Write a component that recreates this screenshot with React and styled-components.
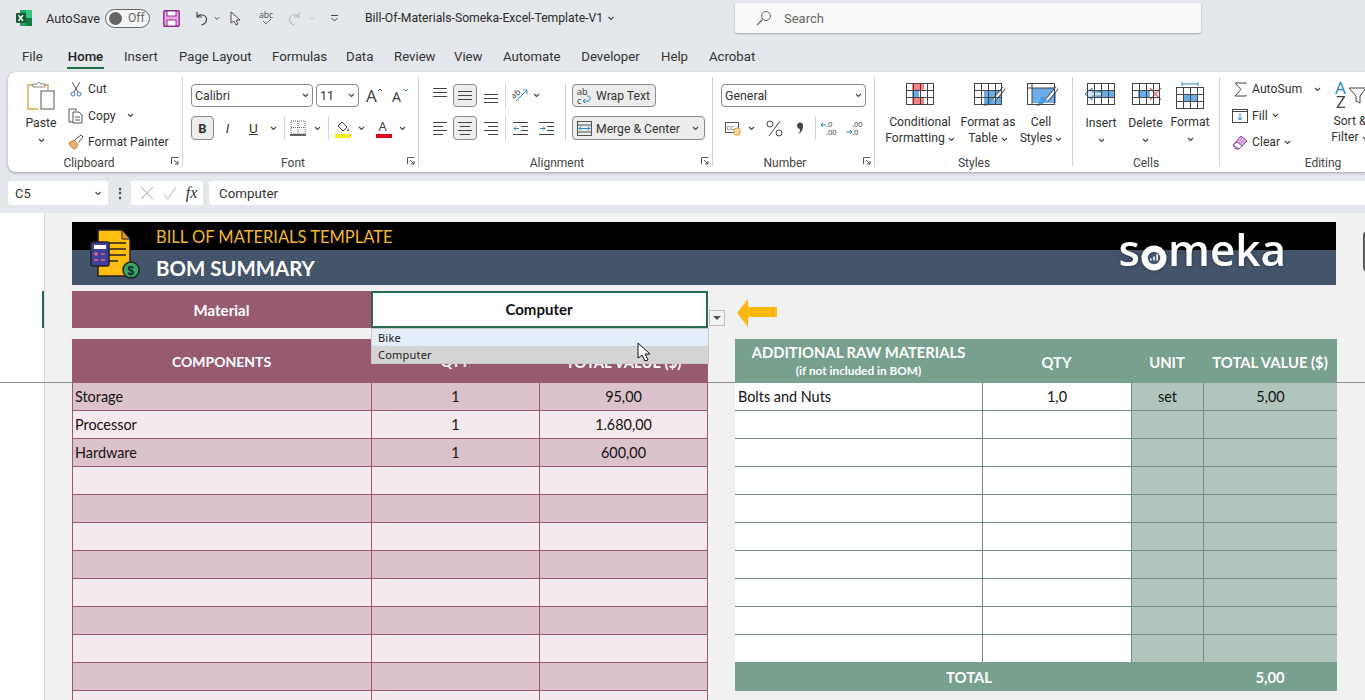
import React from 'react';
import styled, { createGlobalStyle } from 'styled-components';

const Global = createGlobalStyle`
  html, body { margin: 0; padding: 0; height: 100%; overflow: hidden; background: #e4e7eb; }
  #root { height: 100%; }
`;
const ui = `Roboto, "Noto Sans", sans-serif`;
const cell = `"Lato", "Liberation Sans", sans-serif`;

const Page = styled.div`
  width: 1365px; height: 700px; display: flex; flex-direction: column; overflow: hidden;
  background: #e4e7eb; font-family: ${ui}; color: #333;
`;
const TitleBar = styled.div`display: flex; align-items: center; height: 36px; flex: none; font-size: 12.8px; color: #2b2b2b;`;
const Qat = styled.span`
  display: inline-flex; align-items: center; justify-content: center; flex: none;
  width: ${p => p.$w}px; margin-left: ${p => p.$ml || 0}px;
`;
const Toggle = styled.span`
  display: flex; align-items: center; width: 45px; height: 19px; box-sizing: border-box; margin-left: 7px;
  border: 1px solid #666; border-radius: 10px; background: #f4f5f6; padding-left: 3px; font-size: 12px; color: #666; gap: 6px;
  &::before { content: ''; width: 13px; height: 13px; border-radius: 50%; background: #666; }
`;
const DocTitle = styled.span`
  display: inline-flex; align-items: center; gap: 3px; margin-left: 26px; width: 256px; flex: none; font-size: 12.2px; white-space: nowrap;
`;
const SearchBox = styled.div`
  display: flex; align-items: center; gap: 12px; box-sizing: border-box; margin-left: 114px; width: 466px; height: 30px; padding-left: 21px;
  background: #f9f9f9; border-radius: 3px; box-shadow: 0 1px 2px rgba(0,0,0,.28); font-size: 13px; color: #666;
`;
const Tabs = styled.div`display: flex; height: 36px; flex: none; align-items: center; padding: 6px 0 0 22px; box-sizing: border-box; font-size: 13.2px; color: #333;`;
const Tab = styled.span`
  position: relative; flex: none; width: ${p => p.$w}px; margin-left: ${p => p.$ml}px; text-align: center; white-space: nowrap; line-height: 20px;
  ${p => p.$active && `
    font-weight: 500; color: #222;
    &::after { content: ''; position: absolute; left: 0; right: 0; bottom: -2px; height: 2px; background: #1e6b46; }
  `}
`;
const Ribbon = styled.div`
  display: flex; height: 100px; flex: none; margin-left: 8px; box-sizing: border-box; padding-top: 5px; overflow: hidden;
  background: #fff; border-radius: 8px 0 0 8px; box-shadow: 0 1px 3px rgba(0,0,0,.3); font-size: 12.2px; color: #333;
`;
const Group = styled.section`
  position: relative; flex: none; width: ${p => p.$w}px; height: 89px; box-sizing: border-box; display: flex; flex-direction: column;
  border-right: ${p => p.$last ? 'none' : '1px solid #d4d4d4'};
`;
const GroupBody = styled.div`display: flex; flex: 1; padding-top: ${p => p.$pt || 0}px; padding-left: ${p => p.$pl || 0}px;`;
const GroupLabel = styled.div`
  position: absolute; left: ${p => p.$left}px; top: 79px; transform: translateX(-50%); font-size: 12px; line-height: 14px; color: #444; white-space: nowrap;
`;
const Launcher = styled.span`position: absolute; right: 3px; top: 80px; width: 8px; height: 8px; display: flex;`;
const Stack = styled.div`display: flex; flex-direction: column; gap: 10.5px; margin-left: ${p => p.$ml || 0}px; width: ${p => p.$w ? p.$w + 'px' : 'auto'}; flex: none;`;
const SmallTool = styled.div`display: flex; align-items: center; height: 16px; white-space: nowrap;`;
const SmallIcon = styled.span`display: flex; justify-content: center; width: 16px; margin-right: 4px; flex: none;`;
const BigCol = styled.div`
  display: flex; flex-direction: column; align-items: center; flex: none; width: ${p => p.$w}px; margin-left: ${p => p.$ml || 0}px;
  line-height: 16px; text-align: center; white-space: nowrap;
`;
const BigIcon = styled.div`height: ${p => p.$h || 24}px; margin-bottom: ${p => p.$mb ?? 7}px; display: flex; align-items: flex-start; justify-content: center;`;
const ChevLine = styled.div`display: flex; align-items: center; justify-content: center; height: 14px; margin-top: 2px;`;
const Rows = styled.div`display: flex; flex-direction: column; gap: 9px;`;
const ToolRow = styled.div`display: flex; align-items: center; height: ${p => p.$h || 24}px;`;
const SelectBox = styled.div`
  display: flex; align-items: center; justify-content: space-between; box-sizing: border-box; width: ${p => p.$w}px; height: 23px; margin-left: ${p => p.$ml || 0}px;
  padding: 0 3px; border: 1px solid #8a8a8a; border-radius: 4px; font-size: 12.4px; color: #333; flex: none;
`;
const Slot = styled.span`
  display: inline-flex; align-items: center; justify-content: center; flex: none; height: 100%;
  width: ${p => p.$w}px; margin-left: ${p => p.$ml || 0}px; font-size: 13.5px;
`;
const Pressed = styled.span`
  display: inline-flex; align-items: center; justify-content: center; flex: none; box-sizing: border-box; width: ${p => p.$w}px; height: ${p => p.$h || 23}px;
  border: 1px solid #8a8a8a; border-radius: 4px; background: #ececec; font-size: 13px; font-weight: ${p => p.$bold ? 700 : 400};
`;
const ToolSep = styled.span`flex: none; width: 1px; height: 24px; background: #d4d4d4;`;
const AlignPart = styled.div`display: flex; flex-direction: column; gap: 9px; width: 146px; flex: none; border-right: 1px solid #d4d4d4; height: 56px;`;
const WrapPart = styled.div`display: flex; flex-direction: column; gap: 9px; margin-left: 6px;`;
const WrapBtn = styled.div`
  display: flex; align-items: center; gap: 4px; box-sizing: border-box; width: ${p => p.$w}px; height: ${p => p.$h}px; padding: 1px 0 0 4px;
  border: 1px solid #8a8a8a; border-radius: 4px; background: #ececec; white-space: nowrap;
`;
const FormulaBar = styled.div`display: flex; align-items: center; flex: none; height: 24px; margin-top: 9px;`;
const NameBox = styled.div`
  display: flex; align-items: center; justify-content: space-between; box-sizing: border-box; width: 100px; height: 24px; margin-left: 8px; padding: 0 5px 0 7px;
  background: #fff; border-radius: 3px; font-size: 13px;
`;
const Dots = styled.span`width: 23px; text-align: center; flex: none; font-weight: 700; line-height: 20px; font-size: 12px;`;
const FxBox = styled.div`
  display: flex; align-items: center; justify-content: space-around; box-sizing: border-box; width: 72px; height: 24px; padding: 0 1px 0 4px;
  background: #fff; border-radius: 3px; font: italic 400 16px "Liberation Serif", serif; color: #333;
`;
const FormulaInput = styled.div`
  flex: 1; height: 24px; margin-left: 6px; padding-left: 10px; background: #fff; border-radius: 3px 0 0 3px; font-size: 13.4px; line-height: 25px;
`;
const Sheet = styled.div`position: relative; display: flex; flex: 1; margin-top: 8px; min-height: 0; background: #f1f1f1; overflow: hidden;`;
const Gutter = styled.div`position: relative; width: 45px; flex: none; background: #fff; border-right: 1px solid #dcdcdc; box-sizing: border-box;`;
const RowMark = styled.span`position: absolute; right: 0; top: 78px; width: 2px; height: 37px; background: #1e6b46;`;
const FreezeLine = styled.div`position: absolute; left: 0; right: 0; top: 169px; height: 1px; background: #8f8f8f; z-index: 1;`;
const SideTab = styled.div`position: absolute; right: -7px; top: 18px; width: 9px; height: 41px; border-radius: 5px; background: #5a5a5a;`;
const Canvas = styled.div`position: relative; flex: 1; padding: 9px 0 0 27px; font-family: ${cell}; color: #111; font-size: 14.4px;`;
const Banner = styled.div`
  display: flex; width: 1264px; height: 63px; background: linear-gradient(#000 28px, #44546a 28px);
`;
const BannerIcon = styled.div`width: 84px; flex: none; padding: 7px 0 0 16px; box-sizing: border-box;`;
const BannerText = styled.div`display: flex; flex-direction: column;`;
const BannerTop = styled.div`height: 28px; line-height: 30px; font-size: 16.5px; color: #f5b82e; white-space: nowrap;`;
const BannerMain = styled.div`height: 35px; line-height: 36px; font-size: 20.4px; font-weight: 700; color: #fff; white-space: nowrap;`;
const Logo = styled.div`
  display: flex; align-items: baseline; margin-left: auto; margin-right: 50px; color: #fff; font: 600 44px/54px "Open Sans", sans-serif;
  filter: drop-shadow(0 0 2px rgba(0,0,0,.35));
`;
const LogoDot = styled.svg`width: 26px; height: 26px; margin: 0 1px; align-self: center; margin-top: 8px;`;
const MaterialRow = styled.div`display: flex; height: 37px; margin-top: 6px;`;
const MaterialLabel = styled.div`
  display: flex; align-items: center; justify-content: center; width: 299px; flex: none; background: #975a6e; color: #fff; font-weight: 700; font-size: 15px;
`;
const MaterialValue = styled.div`
  position: relative; display: flex; align-items: center; justify-content: center; width: 337px; flex: none; box-sizing: border-box; height: 37px; padding: 0 1px 1px 0;
  background: #fff; border: 2px solid #2c6a4d; font-weight: 700; font-size: 15px; z-index: 5;
`;
const DropList = styled.div`
  position: absolute; left: -1px; right: -2px; top: 36px; height: 34px; background: #fff; box-shadow: 0 0 0 1px #c9c9c9; font: 400 11px/17px "Noto Sans", sans-serif; color: #222;
`;
const DropItem = styled.div`height: 17px; padding-left: 6px; background: ${p => p.$bg}; letter-spacing: .2px;`;
const Cursor = styled.svg`position: absolute; left: 265px; top: 13px; width: 14px; height: 20px;`;
const DropBtn = styled.div`
  display: flex; align-items: center; justify-content: center; box-sizing: border-box; width: 16px; height: 16px; margin: 19px 0 0 1px; background: #f4f4f4; border: 1px solid #bdbdbd;
  &::after { content: ''; border: 4px solid transparent; border-top: 4px solid #555; border-bottom: 0; }
`;
const ArrowWrap = styled.svg`width: 40px; height: 28px; margin: 8px 0 0 12px; flex: none;`;
const Tables = styled.div`position: relative; display: flex; margin-top: 11px; z-index: 2;`;
const TablesGap = styled.div`flex: none; width: 27px;`;
const Grid = styled.div`
  display: grid; grid-template-columns: ${p => p.$cols}; grid-template-rows: 44px; grid-auto-rows: 28px; flex: none;
`;
const Head = styled.div`
  box-sizing: border-box; height: 44px; padding-top: 1px; display: flex; flex-direction: column; align-items: center; justify-content: center;
  background: ${p => p.$bg}; color: #fff; font-weight: 700; font-size: ${p => p.$fs || 14}px; line-height: ${p => p.$lh || 16}px; text-align: center; white-space: nowrap;
`;
const HeadMulti = styled(Head)`justify-content: flex-start; padding-top: 3px;`;
const HeadSub = styled.span`font-size: 11.8px; line-height: 18px;`;
const MCell = styled.div`
  box-sizing: border-box; height: 28px; display: flex; align-items: center; justify-content: ${p => p.$left ? 'flex-start' : 'center'}; padding-left: ${p => p.$left ? 2 : 0}px;
  background: ${p => p.$alt ? '#f4e9ec' : '#dcc2cb'}; border-bottom: 1px solid #975a6e; border-left: 1px solid #975a6e;
  &:nth-child(3n+3) { border-right: 1px solid #975a6e; }
`;
const GCell = styled.div`
  box-sizing: border-box; height: 28px; display: flex; align-items: center; justify-content: ${p => p.$left ? 'flex-start' : 'center'}; padding-left: ${p => p.$left ? 3 : 0}px;
  background: ${p => p.$shade ? '#b2c5bd' : '#fff'}; border-bottom: ${p => p.$last ? 0 : '1px solid #6f8f82'}; border-left: ${p => p.$first ? 0 : '1px solid #6f8f82'};
`;
const TotalCell = styled.div`
  grid-column: ${p => p.$span || 'auto'}; height: 29px; margin-top: -1px; display: flex; align-items: center; justify-content: center; background: #78a08e; color: #fff; font-weight: 700; font-size: 14.8px;
`;

const S = { fill: 'none', stroke: '#444', strokeWidth: 1 };
const Chev = ({ c = '#444', w = 7 }) => <svg width={w} height="5" viewBox="0 0 7 5"><path d="M1 1l2.500 2.500L6 1" fill="none" stroke={c} strokeWidth="1.100" /></svg>;
const ExcelLogo = () => <svg width="16" height="16" viewBox="0 0 16 16"><rect x="4" y="0" width="12" height="16" rx="1" fill="#21a366" /><rect x="10" y="0" width="6" height="8" fill="#33c481" /><rect x="10" y="8" width="6" height="8" fill="#107c41" /><rect x="0" y="3" width="10" height="10" rx="1" fill="#185c37" /><path d="M2.500 5.200l4.500 5.600M7 5.200l-4.500 5.600" stroke="#fff" strokeWidth="1.400" /></svg>;
const SaveIcon = () => <svg width="17" height="17" viewBox="0 0 17 17"><rect x=".8" y=".8" width="15.400" height="15.400" rx="1" fill="#eba6ea" stroke="#8c2d8c" strokeWidth="1.400" /><rect x="4" y="1" width="9" height="5" fill="#fff" stroke="#8c2d8c" /><rect x="4" y="10" width="9" height="6" fill="#fff" stroke="#8c2d8c" /></svg>;
const UndoIcon = ({ c = '#444', flip }) => <svg width="15" height="15" viewBox="0 0 15 15" style={flip ? { transform: 'scaleX(-1)' } : undefined}><path d="M4 1v5h5M4 6c2-3 9-3 9.500 2 .3 3-2 5-5 6" fill="none" stroke={c} strokeWidth="1.200" /></svg>;
const PointerIcon = () => <svg width="11" height="15" viewBox="0 0 11 15"><path d="M1 1v11l3-2 2 4 2-1-2-4h4z" fill="#fff" stroke="#444" /></svg>;
const SpellIcon = () => <svg width="16" height="17" viewBox="0 0 16 17"><text x="0" y="8" fontSize="8.500" fontFamily="Noto Sans" fill="#555">abc</text><path d="M4 11l3 3 5-5" fill="none" stroke="#777" /></svg>;
const CustomizeIcon = () => <svg width="9" height="9" viewBox="0 0 9 9"><path d="M1 1.500h7M1.500 4l3 3 3-3" fill="none" stroke="#444" /></svg>;
const SearchIcon = () => <svg width="16" height="16" viewBox="0 0 16 16"><circle cx="10" cy="6" r="4.500" {...S} stroke="#666" /><path d="M6.500 9.500L1 15" stroke="#666" strokeWidth="1.100" /></svg>;
const PasteIcon = () => <svg width="29" height="30" viewBox="0 0 29 30"><path d="M11 28H1V4h20v5" fill="none" stroke="#e0a345" strokeWidth="1.400" /><path d="M6 6V3h4l2-2 2 2h4v3z" fill="#fff" stroke="#888" /><rect x="14" y="10" width="13" height="18" fill="#fff" stroke="#555" /></svg>;
const ScissorsIcon = () => <svg width="12" height="16" viewBox="0 0 12 16"><path d="M2 1l6 10M10 1L4 11" stroke="#555" /><circle cx="3" cy="13" r="2" fill="none" stroke="#3b7fc4" /><circle cx="9" cy="13" r="2" fill="none" stroke="#3b7fc4" /></svg>;
const CopyIcon = () => <svg width="16" height="16" viewBox="0 0 16 16"><path d="M5 14H1V1h7v2" fill="none" stroke="#555" /><path d="M5 4h6l3 3v8H5z" fill="#fff" stroke="#555" /><path d="M7 9h5M7 12h5" stroke="#555" /></svg>;
const PainterIcon = () => <svg width="16" height="16" viewBox="0 0 16 16"><path d="M1 9l5-3 4 5-3 4c-2 0-5-3-6-6z" fill="#e9b56c" stroke="#b8792a" /><path d="M7 6l6-5 2 2-5 6" fill="#fff" stroke="#555" /></svg>;
const GrowA = ({ s, up }) => <svg width="17" height="17" viewBox="0 0 17 17"><text x="0" y="15" fontSize={s} fontFamily="Noto Sans" fill="#444">A</text><path d={up ? 'M12 4l2-2 2 2' : 'M12 2l2 2 2-2'} fill="none" stroke={up ? '#444' : '#3a87c8'} /></svg>;
const BorderIcon = () => <svg width="16" height="16" viewBox="0 0 16 16"><path d="M1 1h14v13H1zM8 1v13M1 7.500h14" fill="none" stroke="#666" strokeDasharray="1 1" /><path d="M0 15h16" stroke="#333" strokeWidth="1.500" /></svg>;
const FillIcon = () => <svg width="16" height="19" viewBox="0 0 16 19"><path d="M3 7l4-4 5 5-4 4z" fill="#fff" stroke="#444" /><path d="M13 9l1 3h-2z" fill="#444" /><rect y="15" width="16" height="4" fill="#f5ee23" /></svg>;
const FontColorIcon = () => <svg width="16" height="19" viewBox="0 0 16 19"><text x="2.500" y="12" fontSize="13" fontFamily="Noto Sans" fill="#444">A</text><rect y="15" width="16" height="4" fill="#d9001b" /></svg>;
const Lines = ({ ys, x = [[0, 14]] }) => <svg width="15" height="15" viewBox="0 0 15 15">{ys.map((y, i) => { const r = x[i] || x[0]; return <path key={i} d={`M${r[0]} ${y}H${r[1]}`} stroke="#444" />; })}</svg>;
const OrientIcon = () => <svg width="17" height="15" viewBox="0 0 17 15"><path d="M4 13L15 2M11 2h4v4" fill="none" stroke="#3a87c8" /><text x="0" y="9" fontSize="8.500" fontFamily="Noto Sans" fill="#444" transform="rotate(-40 4 8)">ab</text></svg>;
const IndentIcon = ({ right }) => <svg width="15" height="13" viewBox="0 0 15 13"><path d="M0 .5h15M0 12.500h15M8 4.500h7M8 8.500h7" stroke="#444" /><path d={right ? 'M1 6.500h5M4 4.500l2 2-2 2' : 'M6 6.500H1M3 4.500l-2 2 2 2'} fill="none" stroke="#2b88c9" /></svg>;
const WrapIcon = () => <svg width="15" height="18" viewBox="0 0 15 18"><text x="0" y="8" fontSize="9" fontFamily="Noto Sans" fill="#444">ab</text><text x="0" y="17" fontSize="9" fontFamily="Noto Sans" fill="#444">c</text><path d="M6 14h5c3 0 3-5 0-5h-1M6 14l2-2M6 14l2 2" fill="none" stroke="#2b88c9" /></svg>;
const MergeIcon = () => <svg width="15" height="15" viewBox="0 0 15 15"><rect x=".5" y=".5" width="14" height="14" fill="none" stroke="#555" /><path d="M.5 4h14M.5 11h14" stroke="#555" /><path d="M2 7.500h11M4 5.500l-2 2 2 2M11 5.500l2 2-2 2" fill="none" stroke="#2b88c9" /></svg>;
const AccountIcon = () => <svg width="17" height="15" viewBox="0 0 17 15"><rect x=".5" y="1.500" width="13" height="10" fill="#fff" stroke="#555" /><text x="1.500" y="9" fontSize="6" fontFamily="Noto Sans" fill="#444">CC</text><rect x="9" y="7" width="6" height="7" rx="2" fill="#f8d9a8" stroke="#e69a2e" /></svg>;
const DecIcon = ({ more }) => <svg width="17" height="15" viewBox="0 0 17 15"><text x="6" y="6" fontSize="7.500" fontFamily="Noto Sans" fill="#444">{more ? '.00' : '.0'}</text><text x="6" y="14" fontSize="7.500" fontFamily="Noto Sans" fill="#444">{more ? '.0' : '.00'}</text><path d={more ? 'M0 11h6M4 9l2 2-2 2' : 'M6 4H1M3 2L1 4l2 2'} fill="none" stroke="#2b88c9" /></svg>;
const GridIco = ({ children, w = 28, h = 22, cols = [7, 14, 21], rows = [7, 14], top = 0 }) => (
  <svg width={w} height={h + top} viewBox={`0 ${-top} ${w} ${h + top}`} style={{ overflow: 'visible' }}>
    {children}
    <rect x=".5" y=".5" width={w - 1} height={h - 1} fill="none" stroke="#444" />
    {cols.map(x => <path key={x} d={`M${x}.5 0V${h}`} stroke="#444" />)}
    {rows.map(y => <path key={y} d={`M0 ${y}.5H${w}`} stroke="#444" />)}
  </svg>
);
const Brush = () => <g><path d="M30 5L20 17" stroke="#444" strokeWidth="4" /><path d="M30 5L20 17" stroke="#fff" strokeWidth="2.200" /><path d="M19 15c-1 5-4 8-10 8 3-2 3-6 6-10z" fill="#4a9bdc" /></g>;
const CondIcon = () => <GridIco><path d="M6 0h12v7H6zM6 14h12v8H6z" fill="#fb7d85" /><path d="M6 7h7v7H6z" fill="#6dace4" /></GridIco>;
const TableIcon = () => <GridIco><path d="M10 7h18v15H10z" fill="#6dace4" /><Brush /></GridIco>;
const StylesIcon = () => <GridIco cols={[]} rows={[]}><path d="M5 5h24v15H5z" fill="#6dace4" /><path d="M5 0v22M0 5h28" stroke="#444" /><Brush /></GridIco>;
const InsertIcon = () => <GridIco><path d="M10 7h18v8H10z" fill="#6dace4" /><path d="M-2 11l7-6v4h10v4H5v4z" fill="#cfe4f6" stroke="#3a87c8" /></GridIco>;
const DeleteIcon = () => <GridIco><path d="M6 7h12v8H6z" fill="#6dace4" /><path d="M18 5l11 12M29 5L18 17" stroke="#e36a6a" strokeWidth="1.200" /></GridIco>;
const FormatIcon = () => <GridIco top={4}><path d="M7 7h14v8H7z" fill="#6dace4" /><path d="M6 -3h16M6 -5v4M22 -5v4" stroke="#2b88c9" /></GridIco>;
const SigmaIcon = () => <svg width="15" height="15" viewBox="0 0 15 15"><path d="M13 2V1H2l6 6.500L2 14h11v-1" fill="none" stroke="#444" /></svg>;
const FillDown = () => <svg width="16" height="14" viewBox="0 0 16 14"><rect x=".5" y=".5" width="15" height="13" fill="none" stroke="#444" /><path d="M0 2.500h16" stroke="#444" /><path d="M8 4v7M5.500 8.500L8 11l2.500-2.500" fill="none" stroke="#2b88c9" /></svg>;
const EraserIcon = () => <svg width="16" height="15" viewBox="0 0 16 15"><path d="M1 10l8-9 6 5-8 8H4z" fill="#d9a7dd" stroke="#8c4a9a" /><path d="M1 10l6 4 3-3-5-4z" fill="#fff" stroke="#8c4a9a" /></svg>;
const SortIcon = () => <svg width="32" height="30" viewBox="0 0 32 30"><text x="1" y="13" fontSize="17" fontFamily="Noto Sans" fill="#2b88c9">A</text><text x="2" y="27" fontSize="17" fontFamily="Noto Sans" fill="#444">Z</text><path d="M15 7h17l-6 8v7l-4-2v-5z" fill="none" stroke="#444" /></svg>;
const LaunchIcon = () => <svg width="8" height="8" viewBox="0 0 8 8"><path d="M.5 7V.5H7.500M3 3l4 4M7 4v3H4" fill="none" stroke="#555" /></svg>;
const XIcon = () => <svg width="14" height="14" viewBox="0 0 14 14"><path d="M1 1l12 12M13 1L1 13" stroke="#c5c5c5" strokeWidth="1.200" /></svg>;
const CheckIcon = () => <svg width="14" height="14" viewBox="0 0 14 14"><path d="M1 8l4 5 8-12" fill="none" stroke="#c5c5c5" strokeWidth="1.200" /></svg>;
const BomIcon = () => (
  <svg width="52" height="50" viewBox="0 0 52 50">
    <path d="M10 1h24l8 9v37H10z" fill="#fdbd11" stroke="#222" strokeWidth="1.500" />
    <path d="M34 1v9h8z" fill="#e8953b" stroke="#222" />
    <path d="M18 14h20M18 20h20M18 26h20M18 32h12" stroke="#222" strokeWidth="1.600" />
    <rect x="3" y="13" width="18" height="24" rx="2" fill="#3f3f9d" stroke="#222" strokeWidth="1.500" />
    <rect x="6" y="16" width="12" height="4" fill="#fff" />
    <path d="M6 25h4M8 23v4M13 25h4M6 31h4M13 31h4" stroke="#ef6a7a" strokeWidth="1.500" />
    <circle cx="43" cy="41" r="8" fill="#35a862" stroke="#222" strokeWidth="1.500" />
    <text x="39.500" y="45.500" fontSize="12" fontWeight="700" fontFamily="Liberation Sans" fill="#123">$</text>
  </svg>
);
const tabs = [['File', 18, 0], ['Home', 37, 27], ['Insert', 32, 20], ['Page Layout', 71, 23], ['Formulas', 53, 22], ['Data', 27, 21], ['Review', 40, 21], ['View', 27, 20], ['Automate', 56, 22], ['Developer', 59, 22], ['Help', 27, 21], ['Acrobat', 46, 21]];
const left = [['Storage', '1', '95,00'], ['Processor', '1', '1.680,00'], ['Hardware', '1', '600,00']];

export default function App() {
  const leftRows = Array.from({ length: 12 }, (_, i) => left[i] || ['', '', '']);
  const rightRows = Array.from({ length: 10 }, (_, i) => i === 0 ? ['Bolts and Nuts', '1,0', 'set', '5,00'] : ['', '', '', '']);
  return (
    <Page>
      <Global />
      <TitleBar>
        <Qat $w={16} $ml={16}><ExcelLogo /></Qat>
        <Qat $w={50} $ml={16}>AutoSave</Qat>
        <Toggle>Off</Toggle>
        <Qat $w={17} $ml={13}><SaveIcon /></Qat>
        <Qat $w={15} $ml={13}><UndoIcon /></Qat>
        <Qat $w={7} $ml={5}><Chev w={6} /></Qat>
        <Qat $w={11} $ml={10}><PointerIcon /></Qat>
        <Qat $w={16} $ml={18}><SpellIcon /></Qat>
        <Qat $w={15} $ml={13}><UndoIcon c="#bbb" flip /></Qat>
        <Qat $w={7} $ml={5}><Chev c="#bbb" w={6} /></Qat>
        <Qat $w={9} $ml={15}><CustomizeIcon /></Qat>
        <DocTitle>Bill-Of-Materials-Someka-Excel-Template-V1 <Chev w={10} /></DocTitle>
        <SearchBox><SearchIcon />Search</SearchBox>
      </TitleBar>
      <Tabs>
        {tabs.map(([t, w, ml], i) => <Tab key={t} $w={w} $ml={ml} $active={i === 1}>{t}</Tab>)}
      </Tabs>
      <Ribbon>
        <Group $w={175}>
          <GroupBody $pt={4}>
            <BigCol $w={34} $ml={16}>
              <BigIcon $h={30} $mb={4}><PasteIcon /></BigIcon>
              Paste
              <ChevLine><Chev /></ChevLine>
            </BigCol>
            <Stack $ml={10}>
              <SmallTool><SmallIcon><ScissorsIcon /></SmallIcon>Cut</SmallTool>
              <SmallTool><SmallIcon><CopyIcon /></SmallIcon>Copy<Qat $w={7} $ml={12}><Chev /></Qat></SmallTool>
              <SmallTool><SmallIcon><PainterIcon /></SmallIcon>Format Painter</SmallTool>
            </Stack>
          </GroupBody>
          <GroupLabel $left={81}>Clipboard</GroupLabel>
          <Launcher><LaunchIcon /></Launcher>
        </Group>
        <Group $w={236}>
          <GroupBody $pt={7} $pl={8}>
            <Rows>
              <ToolRow $h={23}>
                <SelectBox $w={122}>Calibri<Chev /></SelectBox>
                <SelectBox $w={43} $ml={3}>11<Chev /></SelectBox>
                <Slot $w={17} $ml={7}><GrowA s={17} up /></Slot>
                <Slot $w={17} $ml={9}><GrowA s={14} /></Slot>
              </ToolRow>
              <ToolRow>
                <Pressed $w={23} $h={24} $bold>B</Pressed>
                <Slot $w={27}><i>I</i></Slot>
                <Slot $w={25}><u>U</u></Slot>
                <Slot $w={14}><Chev /></Slot>
                <Slot $w={4} />
                <ToolSep />
                <Slot $w={26}><BorderIcon /></Slot>
                <Slot $w={12}><Chev /></Slot>
                <Slot $w={5} />
                <ToolSep />
                <Slot $w={28}><FillIcon /></Slot>
                <Slot $w={8}><Chev /></Slot>
                <Slot $w={24} $ml={7}><FontColorIcon /></Slot>
                <Slot $w={12}><Chev /></Slot>
              </ToolRow>
            </Rows>
          </GroupBody>
          <GroupLabel $left={110}>Font</GroupLabel>
          <Launcher><LaunchIcon /></Launcher>
        </Group>
        <Group $w={294}>
          <GroupBody $pt={7}>
            <AlignPart>
              <ToolRow $h={23}>
                <Slot $w={25} $ml={9}><Lines ys={[0.5, 4.5, 8.5]} /></Slot>
                <Pressed $w={24}><Lines ys={[3.5, 7.5, 11.5]} /></Pressed>
                <Slot $w={28}><Lines ys={[6.5, 10.5, 14.5]} /></Slot>
                <ToolSep />
                <Slot $w={24} $ml={2}><OrientIcon /></Slot>
                <Slot $w={8}><Chev /></Slot>
              </ToolRow>
              <ToolRow>
                <Slot $w={25} $ml={9}><Lines ys={[1.5, 5.5, 9.5, 13.5]} x={[[0, 14], [0, 10], [0, 14], [0, 10]]} /></Slot>
                <Pressed $w={24} $h={24}><Lines ys={[1.5, 5.5, 9.5, 13.5]} x={[[0, 14], [2, 12], [0, 14], [2, 12]]} /></Pressed>
                <Slot $w={28}><Lines ys={[1.5, 5.5, 9.5, 13.5]} x={[[0, 14], [4, 14], [0, 14], [4, 14]]} /></Slot>
                <ToolSep />
                <Slot $w={24} $ml={2}><IndentIcon /></Slot>
                <Slot $w={24} $ml={2}><IndentIcon right /></Slot>
              </ToolRow>
            </AlignPart>
            <WrapPart>
              <WrapBtn $w={84} $h={23}><WrapIcon />Wrap Text</WrapBtn>
              <WrapBtn $w={133} $h={24}><MergeIcon />Merge &amp; Center<Qat $w={7} $ml={8}><Chev /></Qat></WrapBtn>
            </WrapPart>
          </GroupBody>
          <GroupLabel $left={138}>Alignment</GroupLabel>
          <Launcher><LaunchIcon /></Launcher>
        </Group>
        <Group $w={162}>
          <GroupBody $pt={7} $pl={8}>
            <Rows>
              <ToolRow $h={23}><SelectBox $w={145}>General<Chev /></SelectBox></ToolRow>
              <ToolRow>
                <Slot $w={24}><AccountIcon /></Slot>
                <Slot $w={12}><Chev /></Slot>
                <Slot $w={28} $ml={3}><svg width="17" height="17" viewBox="0 0 17 17"><circle cx="4" cy="4" r="3" {...S} /><circle cx="13" cy="13" r="3" {...S} /><path d="M14 1L3 16" {...S} /></svg></Slot>
                <Slot $w={24}><svg width="8" height="13" viewBox="0 0 8 13"><path d="M1 3a3 3 0 1 1 6 1c0 4-2 7-5 8 2-2 2-3 2-5-2 0-3-2-3-4z" fill="#444" /></svg></Slot>
                <Slot $w={3} />
                <ToolSep />
                <Slot $w={24}><DecIcon /></Slot>
                <Slot $w={24} $ml={2}><DecIcon more /></Slot>
              </ToolRow>
            </Rows>
          </GroupBody>
          <GroupLabel $left={72}>Number</GroupLabel>
          <Launcher><LaunchIcon /></Launcher>
        </Group>
        <Group $w={198}>
          <GroupBody $pt={6}>
            <BigCol $w={82} $ml={4}><BigIcon><CondIcon /></BigIcon>Conditional<span>Formatting <Chev /></span></BigCol>
            <BigCol $w={54}><BigIcon><TableIcon /></BigIcon>Format as<span>Table <Chev /></span></BigCol>
            <BigCol $w={52}><BigIcon><StylesIcon /></BigIcon>Cell<span>Styles <Chev /></span></BigCol>
          </GroupBody>
          <GroupLabel $left={99}>Styles</GroupLabel>
        </Group>
        <Group $w={147}>
          <GroupBody $pt={6}>
            <BigCol $w={44} $ml={6}><BigIcon $mb={8}><InsertIcon /></BigIcon>Insert<ChevLine><Chev /></ChevLine></BigCol>
            <BigCol $w={45}><BigIcon $mb={8}><DeleteIcon /></BigIcon>Delete<ChevLine><Chev /></ChevLine></BigCol>
            <BigCol $w={44}><BigIcon><FormatIcon /></BigIcon>Format<ChevLine><Chev /></ChevLine></BigCol>
          </GroupBody>
          <GroupLabel $left={73}>Cells</GroupLabel>
        </Group>
        <Group $w={206} $last>
          <GroupBody $pt={4}>
            <Stack $ml={12} $w={100}>
              <SmallTool><SmallIcon><SigmaIcon /></SmallIcon>AutoSum<Qat $w={7} $ml={12}><Chev /></Qat></SmallTool>
              <SmallTool><SmallIcon><FillDown /></SmallIcon>Fill<Qat $w={7} $ml={4}><Chev /></Qat></SmallTool>
              <SmallTool><SmallIcon><EraserIcon /></SmallIcon>Clear<Qat $w={7} $ml={4}><Chev /></Qat></SmallTool>
            </Stack>
            <BigCol $w={36}><BigIcon $h={30} $mb={2}><SortIcon /></BigIcon>Sort &amp;<span>Filter <Chev /></span></BigCol>
          </GroupBody>
          <GroupLabel $left={103}>Editing</GroupLabel>
        </Group>
      </Ribbon>
      <FormulaBar>
        <NameBox>C5<Chev w={10} /></NameBox>
        <Dots>⋮</Dots>
        <FxBox><XIcon /><CheckIcon /><span>fx</span></FxBox>
        <FormulaInput>Computer</FormulaInput>
      </FormulaBar>
      <Sheet>
        <FreezeLine />
        <Gutter><RowMark /></Gutter>
        <Canvas>
          <Banner>
            <BannerIcon><BomIcon /></BannerIcon>
            <BannerText>
              <BannerTop>BILL OF MATERIALS TEMPLATE</BannerTop>
              <BannerMain>BOM SUMMARY</BannerMain>
            </BannerText>
            <Logo>s<LogoDot viewBox="0 0 25 25"><circle cx="12.500" cy="12.500" r="12" fill="#fff" /><circle cx="12.500" cy="12.500" r="6" fill="#44546a" /><path d="M9.500 15v-2M12.500 15v-4M15.500 15v-6" stroke="#fff" strokeWidth="1.500" /></LogoDot>meka</Logo>
          </Banner>
          <MaterialRow>
            <MaterialLabel>Material</MaterialLabel>
            <MaterialValue>
              Computer
              <DropList>
                <DropItem $bg="#e3eef9">Bike</DropItem>
                <DropItem $bg="#d4d4d4">Computer</DropItem>
                <Cursor viewBox="0 0 14 20"><path d="M1 1v15l4-3 3 6 3-1-3-6h5z" fill="#fff" stroke="#111" /></Cursor>
              </DropList>
            </MaterialValue>
            <DropBtn />
            <ArrowWrap viewBox="0 0 40 28"><path d="M0 14L11 0v8h29v10H11v10z" fill="#fdb813" /></ArrowWrap>
          </MaterialRow>
          <Tables>
            <Grid $cols="299px 168px 169px">
              <Head $bg="#975a6e">COMPONENTS</Head>
              <Head $bg="#975a6e">QTY</Head>
              <Head $bg="#975a6e" $fs={14.8}>TOTAL VALUE ($)</Head>
              {leftRows.map((r, i) => (
                <React.Fragment key={i}>
                  <MCell $alt={i % 2} $left>{r[0]}</MCell>
                  <MCell $alt={i % 2}>{r[1]}</MCell>
                  <MCell $alt={i % 2}>{r[2]}</MCell>
                </React.Fragment>
              ))}
            </Grid>
            <TablesGap />
            <Grid $cols="247px 149px 72px 134px">
              <HeadMulti $bg="#78a08e" $fs={14.8} $lh={20}>ADDITIONAL RAW MATERIALS<HeadSub>(if not included in BOM)</HeadSub></HeadMulti>
              <Head $bg="#78a08e" $fs={14.8}>QTY</Head>
              <Head $bg="#78a08e" $fs={14.8}>UNIT</Head>
              <Head $bg="#78a08e" $fs={14.8}>TOTAL VALUE ($)</Head>
              {rightRows.map((r, i) => (
                <React.Fragment key={i}>
                  <GCell $first $left $last={i === 9}>{r[0]}</GCell>
                  <GCell $last={i === 9}>{r[1]}</GCell>
                  <GCell $shade $last={i === 9}>{r[2]}</GCell>
                  <GCell $shade $last={i === 9}>{r[3]}</GCell>
                </React.Fragment>
              ))}
              <TotalCell $span="span 3">TOTAL</TotalCell>
              <TotalCell>5,00</TotalCell>
            </Grid>
          </Tables>
        </Canvas>
        <SideTab />
      </Sheet>
    </Page>
  );
}
